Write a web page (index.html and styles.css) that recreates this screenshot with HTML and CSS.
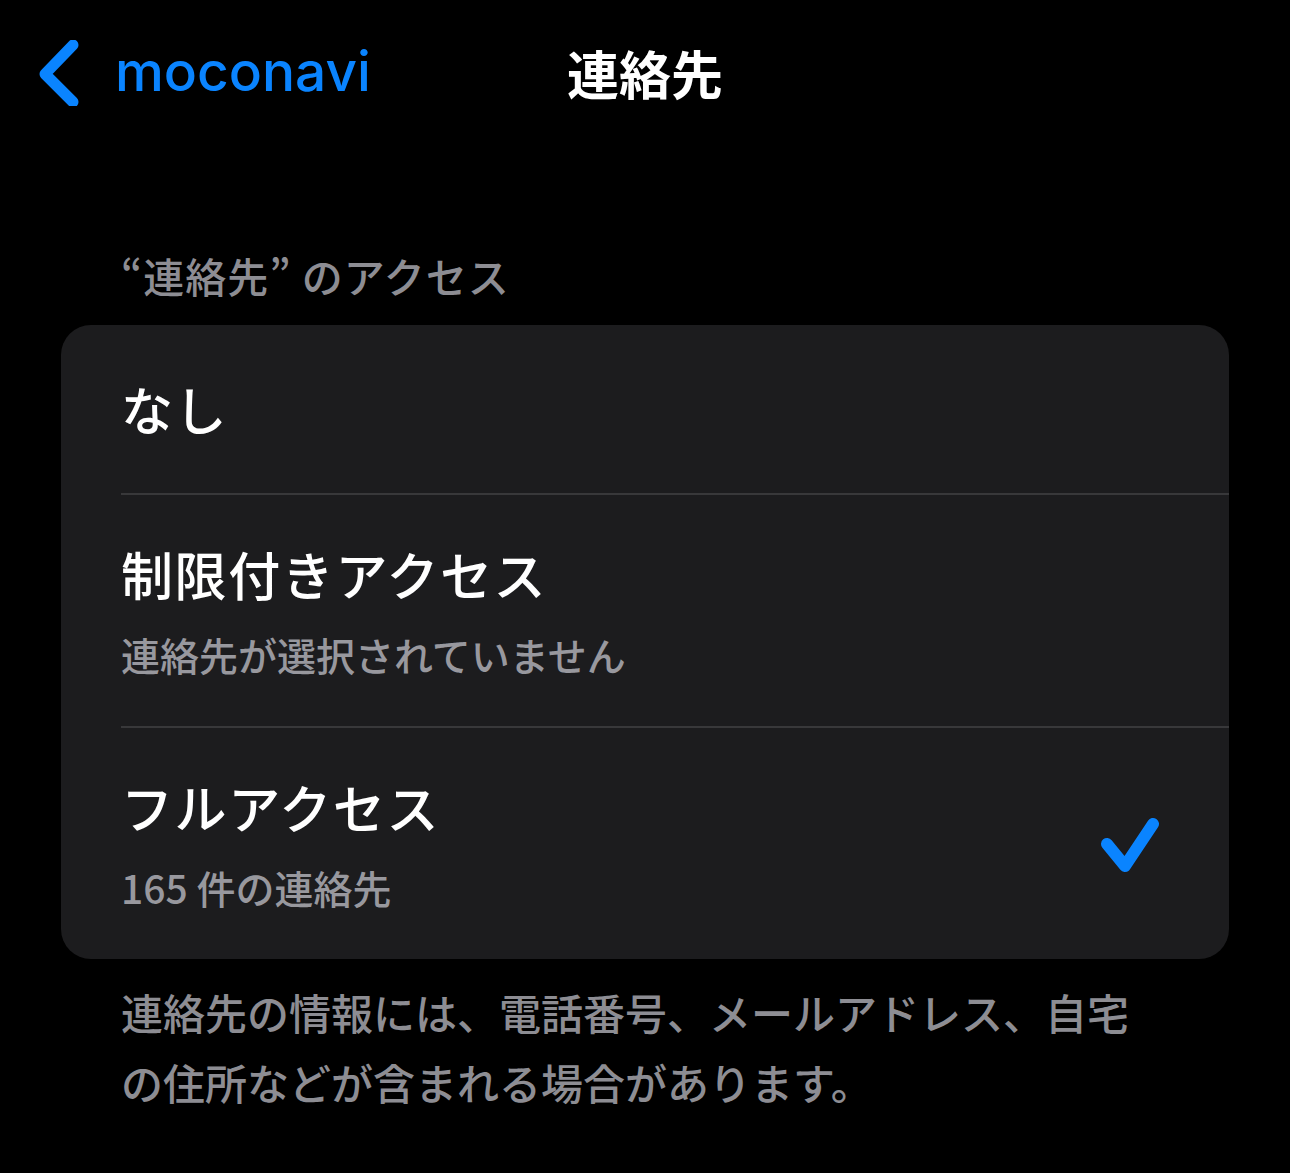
FILE: index.html
```html
<!DOCTYPE html>
<html lang="ja">

<head>
  <meta charset="utf-8">
  <title>連絡先</title>
  <link rel="stylesheet" href="styles.css">
</head>

<body>
  <div class="nav">
    <div class="back">
      <svg class="chevron" width="44" height="66" viewBox="0 0 44 66">
        <polyline points="37,5 9,34 37,62" />
      </svg>
      <span class="backLabel">moconavi</span>
    </div>
    <div class="navTitle">連絡先</div>
    <div></div>
  </div>

  <div class="sectionHeader">“連絡先” のアクセス</div>

  <div class="card">
    <div class="row single">
      <div class="rowText">
        <div class="rowTitle">なし</div>
      </div>
    </div>
    <div class="row">
      <div class="rowText">
        <div class="rowTitle">制限付きアクセス</div>
        <div class="rowSub">連絡先が選択されていません</div>
      </div>
    </div>
    <div class="row last">
      <div class="rowText">
        <div class="rowTitle">フルアクセス</div>
        <div class="rowSub">165 件の連絡先</div>
      </div>
      <svg class="check" width="60" height="56" viewBox="0 0 60 56">
        <polyline points="7,27 25,49 53,7" />
      </svg>
    </div>
  </div>

  <p class="footer">連絡先の情報には、電話番号、メールアドレス、自宅の住所などが含まれる場合があります。</p>
</body>

</html>
```

FILE: styles.css
```css
body {
  margin: 0;
  background-color: #000000;
  font-family: "Noto Sans CJK JP", "Noto Sans", sans-serif;
  color: #ffffff;
}

.nav {
  display: grid;
  grid-template-columns: 1fr auto 1fr;
  align-items: center;
  height: 146px;
}

.back {
  display: flex;
  align-items: center;
  padding-left: 36px;
}

.chevron polyline,
.check polyline {
  fill: none;
  stroke: #0a84ff;
  stroke-linecap: round;
  stroke-linejoin: round;
}

.chevron polyline {
  stroke-width: 11;
}

.check polyline {
  stroke-width: 12;
}

.backLabel {
  font-family: Inter, "Noto Sans", sans-serif;
  font-weight: 500;
  font-size: 55px;
  color: #0a84ff;
  margin-left: 35px;
  line-height: 1;
  position: relative;
  top: -2px;
}

.navTitle {
  font-size: 52px;
  font-weight: 700;
  line-height: 1;
}

.sectionHeader {
  margin-top: 104px;
  padding-left: 121px;
  font-size: 41px;
  line-height: 50px;
  letter-spacing: 1px;
  color: #8d8d93;
  font-weight: 500;
}

.card {
  margin: 25px 61px 0;
  background-color: #1c1c1e;
  border-radius: 30px;
  overflow: hidden;
}

.row {
  display: flex;
  align-items: center;
  margin-left: 60px;
  padding: 44px 69px 27px 0;
  border-bottom: 2px solid #38383a;
}

.row.single {
  padding-top: 49px;
  padding-bottom: 49px;
}

.row.last {
  border-bottom: none;
}

.rowText {
  flex: 1;
}

.rowTitle {
  font-size: 52px;
  line-height: 70px;
  letter-spacing: 1.6px;
  font-weight: 500;
}

.rowSub {
  font-size: 39px;
  line-height: 90px;
  color: #98989e;
  font-weight: 500;
}

.check {
  margin-bottom: 14px;
}

.footer {
  margin: 18px 0 0;
  padding: 0 121px;
  font-size: 42px;
  line-height: 70px;
  color: #8d8d93;
  font-weight: 500;
}
```
